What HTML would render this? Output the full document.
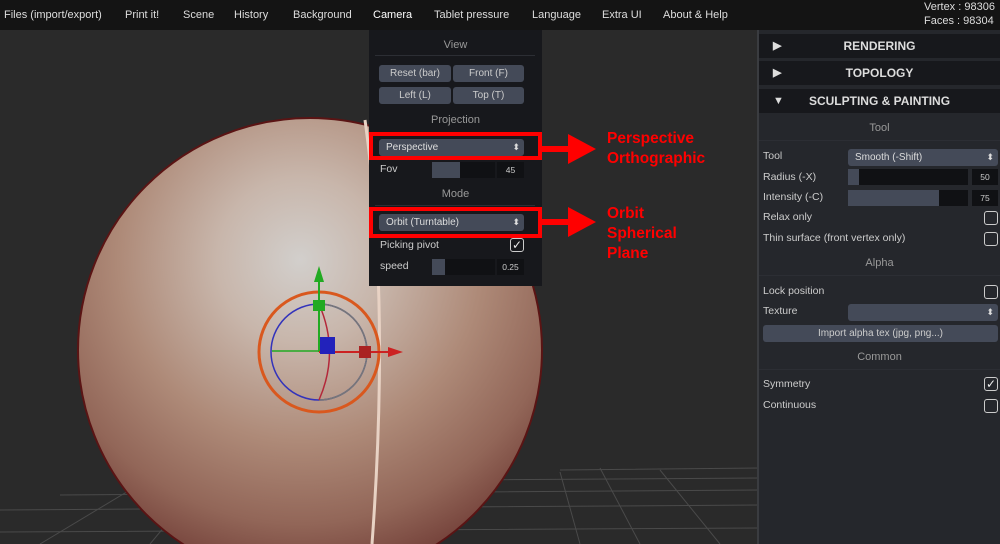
<!DOCTYPE html>
<html><head><meta charset="utf-8"><style>
*{box-sizing:border-box;margin:0;padding:0}
body{width:1000px;height:544px;overflow:hidden;background:#2a2a2a;font-family:"Liberation Sans",sans-serif;position:relative}
.top{position:absolute;left:0;top:0;width:1000px;height:30px;background:#141414;color:#ddd;font-size:11px}
.top span{position:absolute;top:9px}
.cam{position:absolute;left:369px;top:30px;width:173px;height:256px;background:#17181c;color:#ccc;font-size:10.5px}
.hd{position:absolute;left:0;width:173px;text-align:center;color:#999;font-size:11px}
.hl{position:absolute;left:6px;width:160px;height:1px;background:#2c2e34}
.btn{position:absolute;height:17px;background:#444a58;border-radius:3px;color:#ccc;text-align:center;font-size:10px;line-height:17px}
.sel{position:absolute;height:17px;background:#444a58;border-radius:3px;color:#ddd;font-size:10px;line-height:17px;padding-left:7px}
.sel:after{content:"⬍";position:absolute;right:4px;top:0;font-size:9px}
.lab{position:absolute;font-size:10.5px;color:#ccc}
.sl{position:absolute;height:16px;background:#101114}
.sl i{position:absolute;left:0;top:0;bottom:0;background:#444a58}
.num{position:absolute;height:16px;background:#101114;color:#ccc;font-size:8.5px;text-align:center;line-height:16px}
.red{position:absolute;border:4px solid #f00}
.ann{position:absolute;color:#f00;font-weight:bold;font-size:15.5px;line-height:20px}
.panel{position:absolute;left:757px;top:30px;width:243px;height:514px;background:#25272c;border-left:2px solid #3a3c40}
.ph{position:absolute;left:0;width:241px;height:24px;background:#17181c;color:#ddd;font-weight:bold;font-size:12px;line-height:24px;text-align:center}
.ph b{position:absolute;left:14px;font-size:11px}
.cb{position:absolute;width:14px;height:14px;border:1px solid #ccc;border-radius:3px;color:#eee;font-size:12px;line-height:12px;text-align:center}
</style></head><body>
<svg style="position:absolute;left:0;top:0" width="1000" height="544">
<defs>
<radialGradient id="sg" gradientUnits="userSpaceOnUse" cx="300" cy="260" r="330">
<stop offset="0" stop-color="#d2cfcc"/><stop offset="0.25" stop-color="#c8b6ab"/><stop offset="0.55" stop-color="#ae8a78"/><stop offset="0.8" stop-color="#926658"/><stop offset="1" stop-color="#6e3a34"/>
</radialGradient></defs>
<g stroke="#4a4a4a" stroke-width="1" fill="none">
<path d="M0 532 L760 528 M0 510 L760 505 M60 495 L760 490 M150 482 L760 478 M560 470 L760 468"/>
<path d="M40 544 L130 490 M150 544 L200 484 M260 544 L280 482 M640 544 L600 468 M720 544 L660 470 M580 544 L560 472"/>
</g>
<circle cx="310" cy="350" r="232" fill="url(#sg)" stroke="#5a1414" stroke-width="2"/>
<path d="M365 120 Q390 300 372 544" stroke="#e8d2c4" stroke-width="3" fill="none"/>
<circle cx="319" cy="352" r="60" fill="none" stroke="#d9581e" stroke-width="3"/>
<circle cx="319" cy="352" r="48" fill="none" stroke="#3333bb" stroke-width="1.5"/>
<path d="M319 304 A48 48 0 0 1 367 352 A48 48 0 0 1 319 400" stroke="#777" stroke-width="1.5" fill="none"/>
<path d="M319 304 Q340 352 319 400" stroke="#b3283a" stroke-width="1.5" fill="none"/>
<line x1="319" y1="352" x2="319" y2="272" stroke="#2a2" stroke-width="2"/>
<polygon points="319,266 314,282 324,282" fill="#2a2"/>
<rect x="313" y="300" width="12" height="11" fill="#2a2"/>
<line x1="272" y1="351" x2="319" y2="351" stroke="#2a2" stroke-width="1.5"/>
<line x1="319" y1="352" x2="392" y2="352" stroke="#c22" stroke-width="2"/>
<polygon points="403,352 388,347 388,357" fill="#c22"/>
<rect x="359" y="346" width="12" height="12" fill="#a22"/>
<rect x="320" y="337" width="15" height="17" fill="#2222bb"/>
</svg>
<div class="top">
<span style="left:4px">Files (import/export)</span><span style="left:125px">Print it!</span><span style="left:183px">Scene</span><span style="left:234px">History</span><span style="left:293px">Background</span><span style="left:373px;color:#fff">Camera</span><span style="left:434px">Tablet pressure</span><span style="left:532px">Language</span><span style="left:602px">Extra UI</span><span style="left:663px">About &amp; Help</span>
<span style="left:924px;top:1px">Vertex : 98306</span><span style="left:924px;top:15px">Faces : 98304</span>
</div>
<div class="cam">
<div class="hd" style="top:9px">View</div><div class="hl" style="top:25px"></div>
<div class="btn" style="left:10px;top:35px;width:72px">Reset (bar)</div>
<div class="btn" style="left:84px;top:35px;width:71px">Front (F)</div>
<div class="btn" style="left:10px;top:57px;width:72px">Left (L)</div>
<div class="btn" style="left:84px;top:57px;width:71px">Top (T)</div>
<div class="hd" style="top:84px">Projection</div>
<div class="sel" style="left:10px;top:109px;width:145px">Perspective</div>
<div class="lab" style="left:11px;top:133px">Fov</div>
<div class="sl" style="left:63px;top:132px;width:63px"><i style="width:28px"></i></div>
<div class="num" style="left:128px;top:132px;width:27px">45</div>
<div class="hd" style="top:158px">Mode</div><div class="hl" style="top:175px"></div>
<div class="sel" style="left:10px;top:184px;width:145px">Orbit (Turntable)</div>
<div class="lab" style="left:11px;top:209px">Picking pivot</div>
<div class="cb" style="left:141px;top:208px">✓</div>
<div class="lab" style="left:11px;top:230px">speed</div>
<div class="sl" style="left:63px;top:229px;width:63px"><i style="width:13px"></i></div>
<div class="num" style="left:128px;top:229px;width:27px">0.25</div>
</div>
<div class="red" style="left:369px;top:132px;width:173px;height:28px"></div>
<div class="red" style="left:369px;top:207px;width:173px;height:31px"></div>
<svg style="position:absolute;left:540px;top:130px" width="60" height="110">
<rect x="0" y="16" width="30" height="6" fill="#f00"/><polygon points="28,4 56,19 28,34" fill="#f00"/>
<rect x="0" y="89" width="30" height="6" fill="#f00"/><polygon points="28,77 56,92 28,107" fill="#f00"/>
</svg>
<div class="ann" style="left:607px;top:129px">Perspective<br>Orthographic</div>
<div class="ann" style="left:607px;top:204px">Orbit<br>Spherical<br>Plane</div>
<div class="panel">
<div class="ph" style="top:4px"><b>▶</b>RENDERING</div>
<div class="ph" style="top:31px"><b>▶</b>TOPOLOGY</div>
<div class="ph" style="top:59px"><b>▼</b>SCULPTING &amp; PAINTING</div>
<div class="hd" style="top:92px;width:241px">Tool</div><div class="hl" style="top:110px;left:0;width:241px"></div>
<div class="lab" style="left:4px;top:120px">Tool</div>
<div class="sel" style="left:89px;top:119px;width:150px">Smooth (-Shift)</div>
<div class="lab" style="left:4px;top:141px">Radius (-X)</div>
<div class="sl" style="left:89px;top:139px;width:120px"><i style="width:11px"></i></div>
<div class="num" style="left:213px;top:139px;width:26px">50</div>
<div class="lab" style="left:4px;top:161px">Intensity (-C)</div>
<div class="sl" style="left:89px;top:160px;width:120px"><i style="width:91px"></i></div>
<div class="num" style="left:213px;top:160px;width:26px">75</div>
<div class="lab" style="left:4px;top:181px">Relax only</div><div class="cb" style="left:225px;top:181px"></div>
<div class="lab" style="left:4px;top:202px">Thin surface (front vertex only)</div><div class="cb" style="left:225px;top:202px"></div>
<div class="hd" style="top:227px;width:241px">Alpha</div><div class="hl" style="top:245px;left:0;width:241px"></div>
<div class="lab" style="left:4px;top:255px">Lock position</div><div class="cb" style="left:225px;top:255px"></div>
<div class="lab" style="left:4px;top:275px">Texture</div>
<div class="sel" style="left:89px;top:274px;width:150px"></div>
<div class="btn" style="left:4px;top:295px;width:235px">Import alpha tex (jpg, png...)</div>
<div class="hd" style="top:321px;width:241px">Common</div><div class="hl" style="top:339px;left:0;width:241px"></div>
<div class="lab" style="left:4px;top:348px">Symmetry</div><div class="cb" style="left:225px;top:347px">✓</div>
<div class="lab" style="left:4px;top:369px">Continuous</div><div class="cb" style="left:225px;top:369px"></div>
</div>
</body></html>
